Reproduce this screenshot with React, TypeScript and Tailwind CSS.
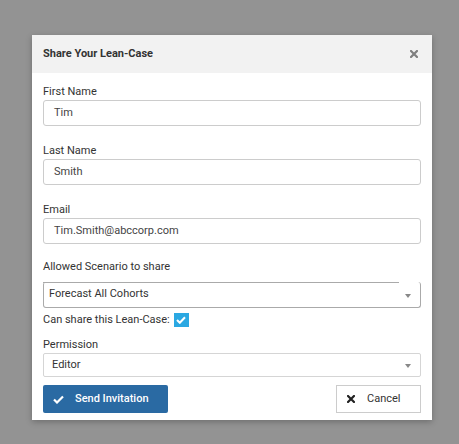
import React from "react";

function Field({ label, value }: { label: string; value: string }) {
  return (
    <div className="mb-[17px]">
      <label className="block leading-[16px] text-[11px] text-[#333]">{label}</label>
      <div className="h-[26px] border border-[#ccc] rounded-[3px] flex items-center pl-[10px] text-[11px] text-[#444]">
        {value}
      </div>
    </div>
  );
}

function Caret() {
  return (
    <svg width="6" height="4" viewBox="0 0 6 4" className="absolute right-[9px] top-1/2 -translate-y-[1px]">
      <path d="M0 0h6L3 4z" fill="#888" />
    </svg>
  );
}

export default function App() {
  return (
    <div
      className="w-[459px] h-[444px] bg-[#939393] overflow-hidden pt-[35px] pl-[32px]"
      style={{ fontFamily: "Roboto, 'Liberation Sans', sans-serif" }}
    >
      <div className="w-[400px] h-[385px] bg-white shadow-[0_2px_6px_rgba(0,0,0,0.25)]">
        <div className="h-[38px] bg-[#f2f2f2] flex items-center justify-between pl-[11px] pr-[14px]">
          <h2 className="text-[11px] font-bold text-[#333]">Share Your Lean-Case</h2>
          <svg width="8" height="8" viewBox="0 0 8 8">
            <path d="M1 1l6 6M7 1L1 7" stroke="#7f7f7f" strokeWidth="2.2" strokeLinecap="square" />
          </svg>
        </div>

        <div className="px-[11px] pt-[11px]">
          <Field label="First Name" value="Tim" />
          <Field label="Last Name" value="Smith" />
          <Field label="Email" value="Tim.Smith@abccorp.com" />

          <label className="block leading-[16px] text-[11px] text-[#333] -mt-[2px]">Allowed Scenario to share</label>
          <div className="relative mt-[7px] h-[26px] border-x border-b border-[#aaa] rounded-[3px] flex items-center pl-[5px] text-[11px] text-[#333]">
            <div className="absolute left-[-1px] top-0 w-[356px] h-px bg-[#aaa]" />
            <div className="absolute right-[-1px] top-[3px] w-px h-[4px] bg-[#aaa]" />
            Forecast All Cohorts
            <Caret />
          </div>

          <div className="flex items-center gap-[4px] h-[14px] mt-[5px] text-[11px] text-[#333]">
            <span>Can share this Lean-Case:</span>
            <span className="w-[15px] h-[14px] bg-[#2ba8e2] flex items-center justify-center">
              <svg width="10" height="8" viewBox="0 0 10 8">
                <path d="M1 4l2.8 2.8L9 1.2" stroke="white" strokeWidth="2" fill="none" />
              </svg>
            </span>
          </div>

          <label className="block leading-[16px] mt-[10px] text-[11px] text-[#333]">Permission</label>
          <div className="relative h-[24px] border border-[#d5d5d5] rounded-[2px] flex items-center pl-[8px] text-[11px] text-[#333]">
            Editor
            <Caret />
          </div>

          <div className="flex justify-between mt-[8px]">
            <button className="w-[125px] h-[28px] bg-[#2a6aa3] rounded-[2px] flex items-center pl-[10px] text-white text-[11px] font-medium">
              <svg width="11" height="9" viewBox="0 0 11 9" className="mr-[11px]">
                <path d="M1 4.5l3 3L10 1.5" stroke="white" strokeWidth="2.2" fill="none" />
              </svg>
              Send Invitation
            </button>
            <button className="w-[85px] h-[28px] bg-white border border-[#ccc] flex items-center pl-[10px] text-[11px] text-[#333]">
              <svg width="8" height="8" viewBox="0 0 8 8" className="mr-[12px]">
                <path d="M1 1l6 6M7 1L1 7" stroke="#222" strokeWidth="2.2" strokeLinecap="square" />
              </svg>
              Cancel
            </button>
          </div>
        </div>
      </div>
    </div>
  );
}
